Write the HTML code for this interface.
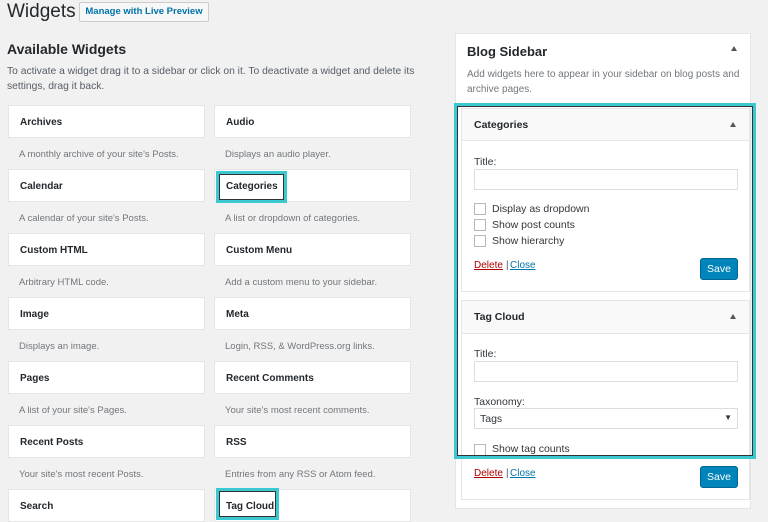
<!DOCTYPE html>
<html><head><style>
*{box-sizing:border-box;margin:0;padding:0}
body{width:768px;height:517px;overflow:hidden;background:#f1f1f1;font-family:"Liberation Sans",sans-serif;color:#23282d;position:relative}
.a{position:absolute;white-space:nowrap}
.w{position:absolute;width:197px;height:33px;background:#fff;border:1px solid #e5e5e5;font-size:10px;font-weight:bold;padding:11px 0 0 11px;color:#23282d}
.d{position:absolute;font-size:9.5px;color:#72777c;white-space:nowrap}
.hl{position:absolute;border:3px solid #3cc8d0;box-shadow:inset 0 0 0 1px #333}
.cb{position:absolute;width:12px;height:12px;border:1px solid #b4b9be;background:#fff}
.lbl{position:absolute;font-size:10.5px;color:#32373c;white-space:nowrap}
.inp{position:absolute;height:21px;border:1px solid #ddd;background:#fff}
.lnk{position:absolute;font-size:10px;text-decoration:underline}
.save{position:absolute;width:38px;height:22px;background:#0085ba;border:1px solid #006799;border-radius:3px;color:#fff;font-size:10.5px;text-align:center;line-height:20px}
.tri{position:absolute;width:0;height:0;border-left:3.5px solid transparent;border-right:3.5px solid transparent;border-bottom:5px solid #555}
</style></head><body>
<div class="a" style="left:7px;top:1px;font-size:19px;color:#23282d">Widgets</div>
<div class="a" style="left:79px;top:2px;width:130px;height:20px;border:1px solid #ccc;background:#f7f7f7;font-size:9.5px;font-weight:bold;color:#0073aa;text-align:center;line-height:18px;border-radius:2px">Manage with Live Preview</div>
<div class="a" style="left:7px;top:41px;font-size:14px;font-weight:bold">Available Widgets</div>
<div class="a" style="left:7px;top:64px;width:420px;white-space:normal;font-size:10.3px;line-height:15px;color:#555d66">To activate a widget drag it to a sidebar or click on it. To deactivate a widget and delete its settings, drag it back.</div>

<div class="w" style="left:8px;top:105px">Archives</div><div class="d" style="left:19px;top:149px">A monthly archive of your site's Posts.</div>
<div class="w" style="left:214px;top:105px">Audio</div><div class="d" style="left:225px;top:149px">Displays an audio player.</div>
<div class="w" style="left:8px;top:169px">Calendar</div><div class="d" style="left:19px;top:213px">A calendar of your site's Posts.</div>
<div class="w" style="left:214px;top:169px">Categories</div><div class="d" style="left:225px;top:213px">A list or dropdown of categories.</div>
<div class="w" style="left:8px;top:233px">Custom HTML</div><div class="d" style="left:19px;top:277px">Arbitrary HTML code.</div>
<div class="w" style="left:214px;top:233px">Custom Menu</div><div class="d" style="left:225px;top:277px">Add a custom menu to your sidebar.</div>
<div class="w" style="left:8px;top:297px">Image</div><div class="d" style="left:19px;top:341px">Displays an image.</div>
<div class="w" style="left:214px;top:297px">Meta</div><div class="d" style="left:225px;top:341px">Login, RSS, &amp; WordPress.org links.</div>
<div class="w" style="left:8px;top:361px">Pages</div><div class="d" style="left:19px;top:405px">A list of your site's Pages.</div>
<div class="w" style="left:214px;top:361px">Recent Comments</div><div class="d" style="left:225px;top:405px">Your site's most recent comments.</div>
<div class="w" style="left:8px;top:425px">Recent Posts</div><div class="d" style="left:19px;top:469px">Your site's most recent Posts.</div>
<div class="w" style="left:214px;top:425px">RSS</div><div class="d" style="left:225px;top:469px">Entries from any RSS or Atom feed.</div>
<div class="w" style="left:8px;top:489px">Search</div>
<div class="w" style="left:214px;top:489px">Tag Cloud</div>
<div class="hl" style="left:216px;top:171px;width:71px;height:32px"></div>
<div class="hl" style="left:216px;top:488px;width:63px;height:32px"></div>

<div class="a" style="left:455px;top:33px;width:296px;height:476px;background:#fff;border:1px solid #e5e5e5"></div>
<div class="a" style="left:467px;top:44px;font-size:13px;font-weight:bold">Blog Sidebar</div>
<div class="tri" style="left:731px;top:46px"></div>
<div class="a" style="left:467px;top:67px;width:280px;white-space:normal;font-size:10px;line-height:15px;color:#72777c">Add widgets here to appear in your sidebar on blog posts and archive pages.</div>

<div class="a" style="left:461px;top:108px;width:289px;height:184px;background:#fff;border:1px solid #e5e5e5"></div>
<div class="a" style="left:462px;top:109px;width:287px;height:32px;background:#f9f9f9;border-bottom:1px solid #e5e5e5"></div>
<div class="a" style="left:474px;top:119px;font-size:10.5px;font-weight:bold">Categories</div>
<div class="tri" style="left:730px;top:122px"></div>
<div class="lbl" style="left:474px;top:156px">Title:</div>
<div class="inp" style="left:474px;top:169px;width:264px"></div>
<div class="cb" style="left:474px;top:203px"></div><div class="lbl" style="left:492px;top:203px">Display as dropdown</div>
<div class="cb" style="left:474px;top:219px"></div><div class="lbl" style="left:492px;top:219px">Show post counts</div>
<div class="cb" style="left:474px;top:235px"></div><div class="lbl" style="left:492px;top:235px">Show hierarchy</div>
<div class="lnk" style="left:474px;top:260px;color:#a00">Delete</div><div class="a" style="left:506px;top:260px;font-size:10px;color:#555">|</div><div class="lnk" style="left:510px;top:260px;color:#0073aa">Close</div>
<div class="save" style="left:700px;top:258px">Save</div>

<div class="a" style="left:461px;top:300px;width:289px;height:200px;background:#fff;border:1px solid #e5e5e5"></div>
<div class="a" style="left:462px;top:301px;width:287px;height:33px;background:#f9f9f9;border-bottom:1px solid #e5e5e5"></div>
<div class="a" style="left:474px;top:311px;font-size:10.5px;font-weight:bold">Tag Cloud</div>
<div class="tri" style="left:730px;top:314px"></div>
<div class="lbl" style="left:474px;top:348px">Title:</div>
<div class="inp" style="left:474px;top:361px;width:264px"></div>
<div class="lbl" style="left:474px;top:396px">Taxonomy:</div>
<div class="inp" style="left:474px;top:408px;width:264px;font-size:10.5px;padding:4px 0 0 5px;color:#32373c">Tags<span style="position:absolute;right:5px;top:4px;font-size:8px">▼</span></div>
<div class="cb" style="left:474px;top:444px"></div><div class="lbl" style="left:492px;top:443px">Show tag counts</div>
<div class="lnk" style="left:474px;top:468px;color:#a00">Delete</div><div class="a" style="left:506px;top:468px;font-size:10px;color:#555">|</div><div class="lnk" style="left:510px;top:468px;color:#0073aa">Close</div>
<div class="save" style="left:700px;top:466px">Save</div>

<div class="hl" style="left:454px;top:103px;width:302px;height:356px"></div>
</body></html>
